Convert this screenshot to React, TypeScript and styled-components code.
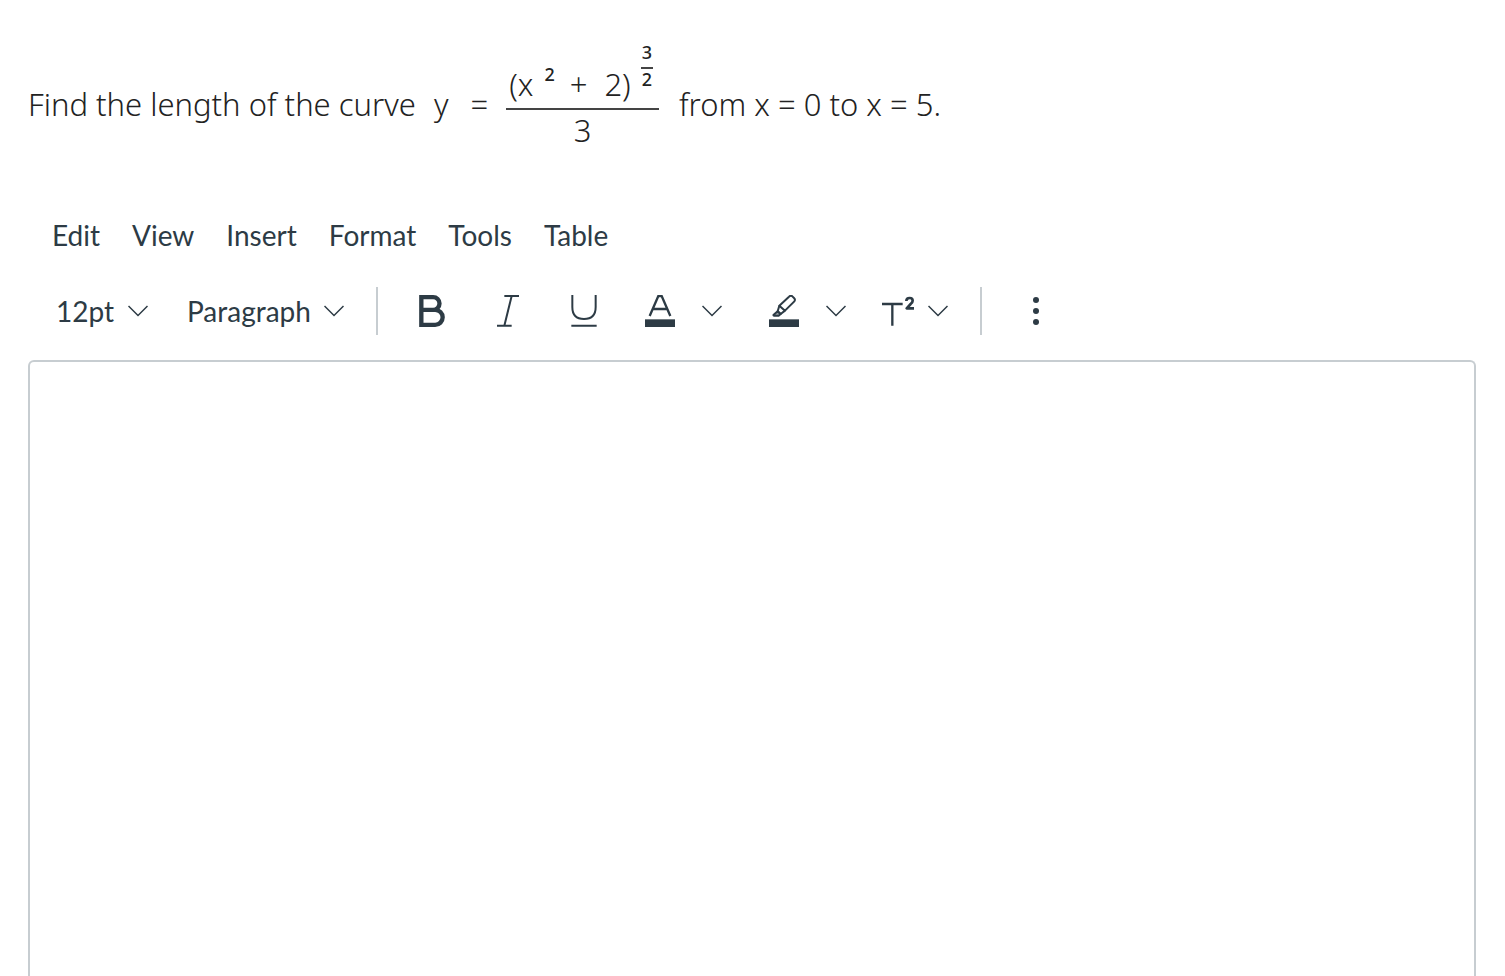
import React from "react";
import styled, { createGlobalStyle } from "styled-components";

const ink = "#2d3b45";
const line = "#c7cdd1";

const GlobalStyle = createGlobalStyle`
  * { box-sizing: border-box; }
  body { margin: 0; background: #fff; }
`;

const Page = styled.main`
  display: flex;
  flex-direction: column;
  height: 100vh;
  overflow: hidden;
  padding: 42px 29px 0 28px;
  color: ${ink};
  font-family: Lato, "Liberation Sans", sans-serif;
  font-size: 28px;
`;

const Question = styled.div`
  display: flex;
  align-items: flex-end;
  flex: none;
  color: #222;
  font-family: "Noto Sans", "Open Sans", sans-serif;
  font-size: 31px;
  font-weight: 300;
  line-height: 40px;
  white-space: nowrap;
`;

const Phrase = styled.span<{ $after?: number }>`
  padding-bottom: 26px;
  margin-right: ${(p) => p.$after ?? 0}px;
`;

const Fraction = styled.span`
  display: flex;
  flex-direction: column;
  align-items: center;
  margin-right: 20px;
`;

const Numerator = styled.span`
  display: flex;
  align-items: flex-end;
  padding: 0 6px 4px 0;
  border-bottom: 2px solid #444;
`;

const Term = styled.span<{ $before?: number }>`
  margin-left: ${(p) => p.$before ?? 0}px;
`;

const Exponent = styled.sup<{ $raise: number; $before: number }>`
  display: flex;
  flex-direction: column;
  align-items: center;
  margin: 0 0 ${(p) => p.$raise}px ${(p) => p.$before}px;
  font-size: 18px;
  font-weight: 500;
  line-height: 20px;
  vertical-align: baseline;
`;

const ExponentTop = styled.span`
  padding: 0 1px 5px;
  border-bottom: 2px solid #444;
`;

const MenuBar = styled.nav`
  display: flex;
  flex: none;
  gap: 32px;
  margin-top: 65px;
  padding-left: 24px;
`;

const MenuButton = styled.button`
  padding: 0;
  border: 0;
  background: none;
  color: inherit;
  font: inherit;
  line-height: 40px;
  cursor: pointer;
`;

const Toolbar = styled.div`
  display: flex;
  flex: none;
  align-items: center;
  height: 48px;
  margin: 32px 0 25px;
  padding-left: 28px;
`;

const SelectBox = styled.label`
  display: flex;
  align-items: center;
  gap: 13px;
  margin-right: 39px;

  &:nth-of-type(2) { margin-right: 0; }
`;

const Select = styled.select`
  appearance: none;
  padding: 0;
  border: 0;
  background: none;
  color: inherit;
  font: inherit;
  line-height: 40px;
  cursor: pointer;
`;

const Separator = styled.span<{ $before: number }>`
  width: 2px;
  height: 48px;
  margin: 0 16px 0 ${(p) => p.$before}px;
  background: ${line};
`;

const ToolButton = styled.button`
  display: flex;
  align-items: center;
  justify-content: center;
  width: 76px;
  height: 48px;
  padding: 0;
  border: 0;
  background: none;
  color: inherit;
  cursor: pointer;
`;

const ArrowButton = styled(ToolButton)<{ $after?: number }>`
  width: 28px;
  margin-right: ${(p) => p.$after ?? 0}px;
`;

const ScriptButton = styled(ToolButton)`
  gap: 14px;
  width: auto;
  padding-left: 32px;
`;

const Icon = styled.svg`
  display: block;
  flex: none;
  fill: none;
  stroke: currentColor;
`;

const Editor = styled.textarea`
  flex: 1;
  width: 100%;
  padding: 24px;
  border: 2px solid ${line};
  border-bottom: 0;
  border-radius: 6px 6px 0 0;
  background: #fff;
  color: inherit;
  font: inherit;
  resize: none;
  outline: none;
`;

const Chevron = () => (
  <Icon width="20" height="12" viewBox="0 0 20 12" strokeWidth="1.5">
    <path d="M.5 1 10 10.5 19.5 1" />
  </Icon>
);

const BoldIcon = () => (
  <Icon width="26" height="32" viewBox="0 0 77 96" strokeWidth="13">
    <path d="M6.500 6.500H42a18 18 0 0 1 0 38H7M42 44.500H48a22.500 22.500 0 0 1 0 45H6.500V0" />
  </Icon>
);

const ItalicIcon = () => (
  <Icon width="22" height="32" viewBox="0 0 66 96" strokeWidth="6">
    <path d="M22 3H66M0 92H44M44 3 22 92" />
  </Icon>
);

const UnderlineIcon = () => (
  <Icon width="26" height="32" viewBox="0 0 78 96" strokeWidth="6">
    <path d="M4 0V36Q4 72 39 72T74 36V0M1 92H77" />
  </Icon>
);

const TextColorIcon = () => (
  <Icon width="30" height="32" viewBox="0 0 90 96" strokeWidth="7">
    <path d="M14 63 40 3H50L76 63M24 42H66" />
    <path d="M0 73H90V96H0Z" fill="currentColor" stroke="none" />
  </Icon>
);

const HighlightIcon = () => (
  <Icon width="30" height="32" viewBox="0 0 90 96" strokeWidth="6" strokeLinejoin="round">
    <path d="M31 32 60 5Q65 0 70 4L75 9Q80 14 76 19L48 47Z" />
    <path d="M31 32 26 49 35 57 48 47" />
    <path d="M26 49 14 59Q12 62 16 62H29L35 57Z" fill="currentColor" fillOpacity=".5" />
    <path d="M0 73H90V96H0Z" fill="currentColor" stroke="none" />
  </Icon>
);

const SuperscriptIcon = () => (
  <Icon width="32" height="32" viewBox="0 0 96 96" strokeWidth="7">
    <path d="M0 27H62M31 27V92" />
    <path
      d="M73 18Q73 9 83 9 92 9 92 17 92 22 86 27L74 40H96"
      strokeWidth="8"
      strokeLinejoin="round"
    />
  </Icon>
);

const MoreIcon = () => (
  <Icon width="6" height="30" viewBox="0 0 6 30">
    {[4, 15, 26].map((y) => (
      <circle key={y} cx="3" cy={y} r="3" fill="currentColor" stroke="none" />
    ))}
  </Icon>
);

const menus = ["Edit", "View", "Insert", "Format", "Tools", "Table"];

export default function App() {
  return (
    <>
      <GlobalStyle />
      <Page>
        <Question>
          <Phrase $after={18}>Find the length of the curve</Phrase>
          <Phrase $after={22}>y</Phrase>
          <Phrase $after={18}>=</Phrase>
          <Fraction>
            <Numerator>
              <Term $before={3}>(x</Term>
              <Exponent $raise={20} $before={11}>2</Exponent>
              <Term $before={15}>+</Term>
              <Term $before={17}>2)</Term>
              <Exponent $raise={15} $before={10}>
                <ExponentTop>3</ExponentTop>
                <span>2</span>
              </Exponent>
            </Numerator>
            <span>3</span>
          </Fraction>
          <Phrase>from x = 0 to x = 5.</Phrase>
        </Question>

        <MenuBar aria-label="Editor menu">
          {menus.map((name) => (
            <MenuButton key={name} type="button">{name}</MenuButton>
          ))}
        </MenuBar>

        <Toolbar role="toolbar" aria-label="Formatting">
          <SelectBox>
            <Select aria-label="Font size" defaultValue="12pt">
              <option>10pt</option>
              <option>12pt</option>
              <option>14pt</option>
            </Select>
            <Chevron />
          </SelectBox>
          <SelectBox>
            <Select aria-label="Block format" defaultValue="Paragraph">
              <option>Paragraph</option>
              <option>Heading</option>
            </Select>
            <Chevron />
          </SelectBox>
          <Separator $before={32} />
          <ToolButton type="button" aria-label="Bold"><BoldIcon /></ToolButton>
          <ToolButton type="button" aria-label="Italic"><ItalicIcon /></ToolButton>
          <ToolButton type="button" aria-label="Underline"><UnderlineIcon /></ToolButton>
          <ToolButton type="button" aria-label="Text color"><TextColorIcon /></ToolButton>
          <ArrowButton $after={20} type="button" aria-label="Text color options"><Chevron /></ArrowButton>
          <ToolButton type="button" aria-label="Highlight color"><HighlightIcon /></ToolButton>
          <ArrowButton type="button" aria-label="Highlight color options"><Chevron /></ArrowButton>
          <ScriptButton type="button" aria-label="Superscript and subscript">
            <SuperscriptIcon />
            <Chevron />
          </ScriptButton>
          <Separator $before={32} />
          <ToolButton type="button" aria-label="More"><MoreIcon /></ToolButton>
        </Toolbar>

        <Editor aria-label="Answer" />
      </Page>
    </>
  );
}
